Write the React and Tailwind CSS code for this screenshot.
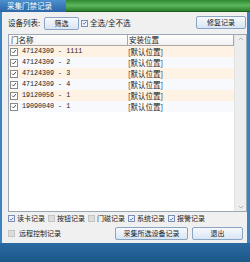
import React from 'react';

const cjk = "font-['SimSun','Noto_Sans_CJK_SC',sans-serif]";
const mono = "font-['Liberation_Mono','Noto_Sans_CJK_SC',monospace]";

const rows = [
  { name: '47124309 - 1111', place: '[默认位置]' },
  { name: '47124309 - 2', place: '[默认位置]' },
  { name: '47124309 - 3', place: '[默认位置]' },
  { name: '47124309 - 4', place: '[默认位置]' },
  { name: '19120056 - 1', place: '[默认位置]' },
  { name: '19090040 - 1', place: '[默认位置]' },
];

function Check({ className = '' }) {
  return (
    <svg viewBox="0 0 8 8" className={className}>
      <path d="M1.5 4.2 L3.3 6 L6.6 2" fill="none" stroke="currentColor" strokeWidth="1.1" />
    </svg>
  );
}

function RowBox() {
  return (
    <span className="w-[8px] h-[8px] border border-[#8a8a8a] bg-white flex items-center justify-center text-[#333]">
      <Check className="w-[7px] h-[7px]" />
    </span>
  );
}

function SmallBox({ checked }) {
  return checked ? (
    <span className="w-[7px] h-[7px] border border-[#7b8fb8] bg-[#eef3fb] flex items-center justify-center text-[#2a4a9a] shrink-0">
      <Check className="w-[6px] h-[6px]" />
    </span>
  ) : (
    <span className="w-[7px] h-[7px] border border-[#c4c4c4] bg-[#dcdcdc] shrink-0" />
  );
}

function Btn({ children, className = '' }) {
  return (
    <button
      className={`h-[13px] rounded-[2px] border border-[#8aa4c4] bg-gradient-to-b from-[#f6f9fd] to-[#d9e5f3] text-[7px] text-[#1a1a1a] leading-none flex items-center justify-center ${cjk} ${className}`}
    >
      {children}
    </button>
  );
}

const options = [
  { label: '读卡记录', on: true },
  { label: '按钮记录', on: false },
  { label: '门磁记录', on: false },
  { label: '系统记录', on: true },
  { label: '报警记录', on: true },
];

export default function App() {
  return (
    <div className={`w-[250px] h-[262px] flex flex-col bg-[#f0f0f0] ${cjk} text-[#1a1a1a]`}>
      {/* title bar */}
      <div className="h-[12px] flex shrink-0">
        <div className="w-[66px] bg-gradient-to-b from-[#4d8fcf] to-[#2a66a6] text-white text-[7.5px] leading-none flex items-center pl-[7px]">
          采集门禁记录
        </div>
        <div className="flex-1 bg-gradient-to-b from-[#2f8a2f] via-[#5bb65b] to-[#2c7f2c] border-b border-[#1d5e1d]" />
      </div>

      {/* body */}
      <div className="flex-1 flex flex-col border-l-2 border-r-[3px] border-[#3a84c4] pl-[5px] pr-0">
        <div className="h-[22px] flex items-center text-[7.5px]">
          <span className="w-[36px] pl-[1px]">设备列表:</span>
          <Btn className="w-[35px] ml-[1px] bg-gradient-to-b from-[#e4eefa] to-[#cfdff1]">筛选</Btn>
          <span className="ml-[2px]"><SmallBox checked /></span>
          <span className="ml-[2px]">全选/全不选</span>
          <Btn className="w-[50px] ml-auto mr-[1px] -mt-[2px]">修复记录</Btn>
        </div>

        {/* list */}
        <div className="h-[178px] ml-[1px] border border-[#9aa7b5] bg-white flex">
          <div className="flex-1 flex flex-col">
            <div className="h-[11px] flex text-[7.5px] leading-none border-b border-[#a8a8a8] bg-gradient-to-b from-white to-[#f1f1f1]">
              <div className="w-[119px] border-r border-[#a8a8a8] flex items-center pl-[2px]">门名称</div>
              <div className="flex-1 border-r border-[#a8a8a8] flex items-center pl-[1px]">安装位置</div>
            </div>
            {rows.map((r, i) => (
              <div key={i} className={`h-[11px] flex items-center ${i % 2 === 0 ? 'bg-[#fdf2e4]' : 'bg-[#f8f9fc]'}`}>
                <div className="w-[119px] flex items-center pl-[1px]">
                  <RowBox />
                  <span className={`ml-[4px] text-[6.7px] leading-none ${mono}`}>{r.name}</span>
                </div>
                <div className="flex-1 text-[7.5px] leading-none">{r.place}</div>
              </div>
            ))}
          </div>
          <div className="w-[12px] bg-[#ededed] border-l border-[#e2e2e2] flex flex-col items-center justify-between py-[2px] text-[#a0a0a0]">
            <svg viewBox="0 0 8 5" className="w-[6px] h-[4px]"><path d="M1 4 L4 1 L7 4" fill="none" stroke="currentColor" /></svg>
            <svg viewBox="0 0 8 5" className="w-[6px] h-[4px]"><path d="M1 1 L4 4 L7 1" fill="none" stroke="currentColor" /></svg>
          </div>
        </div>

        {/* options */}
        <div className="flex items-center mt-[3px] text-[7px] leading-none pl-[1px]">
          {options.map((o) => (
            <div key={o.label} className="w-[40px] flex items-center">
              <SmallBox checked={o.on} />
              <span className="ml-[2px]">{o.label}</span>
            </div>
          ))}
        </div>
        <div className="flex items-center mt-[5px] text-[7px] leading-none pl-[1px]">
          <SmallBox checked={false} />
          <span className="ml-[4px]">远程控制记录</span>
          <Btn className="w-[73px] h-[12px] ml-auto">采集所选设备记录</Btn>
          <Btn className="w-[51px] h-[12px] ml-[4px] mr-[4px]">退出</Btn>
        </div>
      </div>

      {/* bottom frame */}
      <div className="h-[19px] shrink-0 bg-gradient-to-b from-[#2a6aa2] to-[#1c5788]" />
    </div>
  );
}
